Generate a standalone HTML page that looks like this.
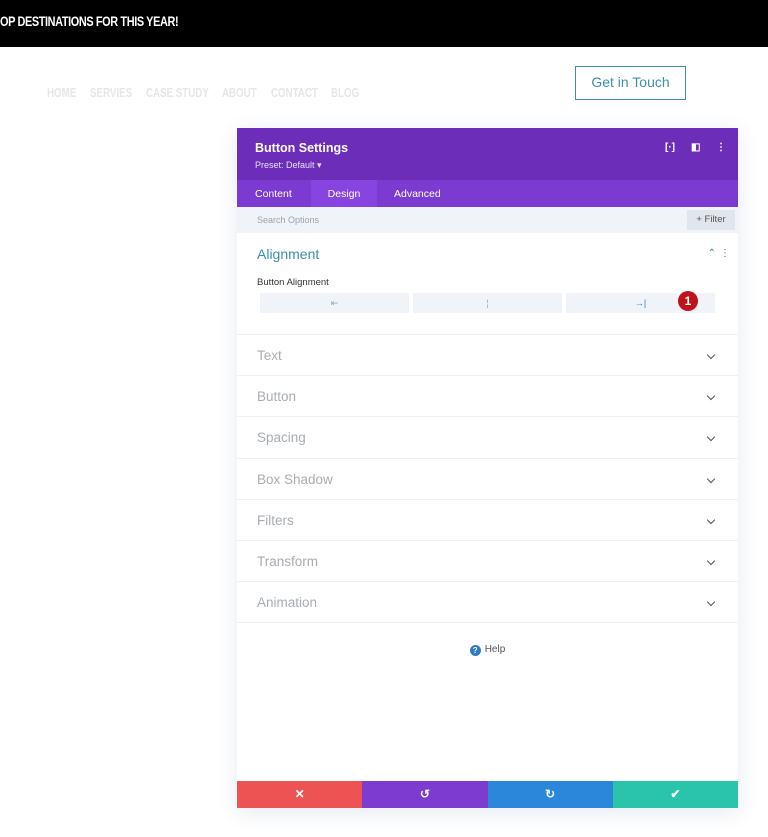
<!DOCTYPE html>
<html><head><meta charset="utf-8"><style>
*{margin:0;padding:0;box-sizing:border-box}
body{width:768px;height:837px;background:#fff;font-family:"Liberation Sans",sans-serif;position:relative;overflow:hidden}
.top{position:absolute;left:0;top:0;width:768px;height:47px;background:#000;color:#fff;font-weight:bold;font-size:14px;letter-spacing:-0.5px;padding:13px 0 0 0}
.top span{display:inline-block;transform:scaleX(0.78);transform-origin:left}
.nav{position:absolute;top:85px;left:47px;color:#e6e6e6;font-weight:bold;font-size:13px}
.nav span{position:absolute;white-space:nowrap;transform:scaleX(0.75);transform-origin:left}
.git{position:absolute;left:575px;top:66px;width:111px;height:34px;border:1.5px solid #3e8fa8;color:#3e8fa8;font-size:14px;text-align:center;line-height:31px}
.panel{position:absolute;left:237px;top:128px;width:501px;height:680px;background:#fff;box-shadow:0 4px 20px rgba(40,80,140,.12)}
.hd{height:52px;background:#6c2eb9;color:#fff;padding:13px 18px}
.hd b{font-size:12.5px;display:block}
.hd small{font-size:9px;opacity:.85}
.ic{position:absolute;top:14px;color:#fff;font-size:10px;font-weight:bold}
.tabs{height:27px;background:#7b3bd0;color:#fff;font-size:10.5px;position:relative}
.tabs span{position:absolute;top:1px;line-height:27px}
.srch{height:26px;background:#f0f3f8;color:#9aa3ae;font-size:9px;padding:8px 20px;position:relative}
.flt{position:absolute;right:3px;top:3px;height:20px;width:48px;background:#e1e5ec;color:#555;font-size:9.5px;text-align:center;line-height:20px}
.al{position:relative;height:102px;border-bottom:1px solid #eef0f4}
.al h3{position:absolute;left:20px;top:13px;font-weight:normal;color:#3e8fa8;font-size:14px}
.al p{position:absolute;left:20px;top:44px;font-size:9.5px;color:#333}
.bx{position:absolute;top:60px;width:149px;height:20px;background:#f0f3f8;color:#9aa;font-size:9px;text-align:center;line-height:20px}
.badge{position:absolute;left:441px;top:58px;width:20px;height:20px;border-radius:50%;background:#c0121a;color:#fff;font-size:12px;font-weight:bold;text-align:center;line-height:20px}
.row{height:41.2px;border-bottom:1px solid #eef0f4;position:relative;color:#a8adb3;font-size:13.5px;padding:13px 20px}
.row:after{content:"";position:absolute;right:24px;top:17px;width:5px;height:5px;border-right:1.5px solid #555;border-bottom:1.5px solid #555;transform:rotate(45deg)}
.help{position:absolute;top:516px;left:0;width:100%;text-align:center;font-size:10px;color:#555}
.help i{display:inline-block;width:11px;height:11px;border-radius:50%;background:#2e7cc4;color:#fff;font-style:normal;font-size:8px;line-height:11px;font-weight:bold;vertical-align:-1px;margin-right:4px}
.ft{position:absolute;bottom:0;left:0;width:100%;height:27px;display:flex}
.ft div{flex:1;color:#fff;text-align:center;line-height:27px;font-size:12px;font-weight:bold}
</style></head><body>
<div class="top"><span>OP DESTINATIONS FOR THIS YEAR!</span></div>
<div class="nav"><span style="left:0">HOME</span><span style="left:43px">SERVIES</span><span style="left:99px">CASE STUDY</span><span style="left:175px">ABOUT</span><span style="left:224px">CONTACT</span><span style="left:284px">BLOG</span></div>
<div class="git">Get in Touch</div>
<div class="panel">
<div class="hd"><b>Button Settings</b><small>Preset: Default ▾</small>
<span class="ic" style="left:428px">[·]</span><span class="ic" style="left:454px">◧</span><span class="ic" style="left:479px">⋮</span></div>
<div class="tabs"><span style="left:18px">Content</span><span style="left:74px;width:66px;top:0;height:27px;background:#8844e0;text-align:center;padding-top:1px">Design</span><span style="left:157px">Advanced</span></div>
<div class="srch">Search Options<div class="flt">+ Filter</div></div>
<div class="al"><h3>Alignment</h3><span style="position:absolute;right:22px;top:15px;color:#3e8fa8;font-size:10px">⌃</span><span style="position:absolute;right:8px;top:15px;color:#555;font-size:10px">⋮</span>
<p>Button Alignment</p>
<div class="bx" style="left:23px">⇤</div><div class="bx" style="left:176px">¦</div><div class="bx" style="left:329px;color:#2e7cc4">→|</div>
<div class="badge">1</div></div>
<div class="row">Text</div><div class="row">Button</div><div class="row">Spacing</div><div class="row">Box Shadow</div><div class="row">Filters</div><div class="row">Transform</div><div class="row">Animation</div>
<div class="help"><i>?</i>Help</div>
<div class="ft"><div style="background:#ed5353">✕</div><div style="background:#7d3bcf">↺</div><div style="background:#2b87da">↻</div><div style="background:#29c4a9">✔</div></div>
</div>
</body></html>
